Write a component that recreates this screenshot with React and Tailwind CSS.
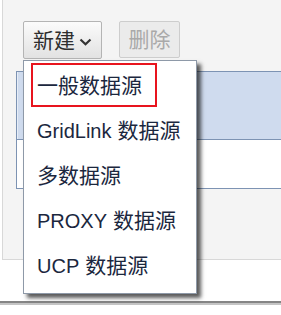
import React from 'react';

const items = [
  { latin: '', cjk: '一般数据源' },
  { latin: 'GridLink', cjk: '数据源' },
  { latin: '', cjk: '多数据源' },
  { latin: 'PROXY', cjk: '数据源' },
  { latin: 'UCP', cjk: '数据源' },
];

const ChevronDown = () => (
  <svg width="13" height="8" viewBox="0 0 13 8" className="ml-[4px] mt-[3px]">
    <path d="M1.5 1.5 L6.5 6.3 L11.5 1.5" fill="none" stroke="#333" strokeWidth="2.2" />
  </svg>
);

const App = () => {
  return (
    <div
      className="relative w-[281px] h-[315px] overflow-hidden bg-white"
      style={{ fontFamily: '"Liberation Sans", "Noto Sans CJK SC", sans-serif' }}
    >
      {/* panel */}
      <div className="ml-[2px] h-[260px] border-l border-b border-[#d8d8d8] bg-[#f4f4f4] pt-[21px] pl-[13px]">
        <div className="flex gap-[17px] ml-[7px]">
          <button className="flex items-center justify-center w-[79px] h-[38px] rounded-[2px] border border-[#b4b4b4] bg-gradient-to-b from-[#fbfbfb] to-[#e2e2e2] text-[21px] text-[#2e2e2e] leading-none">
            新建
            <ChevronDown />
          </button>
          <button className="flex items-center justify-center w-[61px] h-[37px] rounded-[2px] border border-[#cdcdcd] bg-[#ebebeb] text-[21px] text-[#a9a9a9] leading-none">
            删除
          </button>
        </div>

        {/* grid behind the menu */}
        <div className="mt-[12px] border-l border-t border-b border-[#7d93b3] bg-white">
          <div className="h-[67px] bg-[#cfdbee] border-l border-[#e6edf7]" />
          <div className="h-[49px] border-t border-[#7d93b3]" />
        </div>
      </div>

      {/* bottom bar */}
      <div className="mt-[41px] h-[2px] bg-[#858585]" />
      <div className="h-[2px] bg-[#c4c4c4]" />

      {/* dropdown menu */}
      <div className="absolute left-[23px] top-[60px] w-[174px] h-[234px] border border-[#8e99a8] bg-white pt-[2px] shadow-[4px_4px_4px_rgba(0,0,0,0.65)]">
        {items.map((it) => (
          <div key={it.latin + it.cjk} className="flex items-center h-[45px] pl-[13px] text-[20px] text-[#1b273e] whitespace-nowrap">
            {it.latin && <span className="mr-[6px]">{it.latin}</span>}
            <span className="text-[21px]">{it.cjk}</span>
          </div>
        ))}
        <div className="absolute left-[7px] top-[2px] w-[126px] h-[44px] border-2 border-[#e8141e]" />
      </div>
    </div>
  );
};

export default App;
